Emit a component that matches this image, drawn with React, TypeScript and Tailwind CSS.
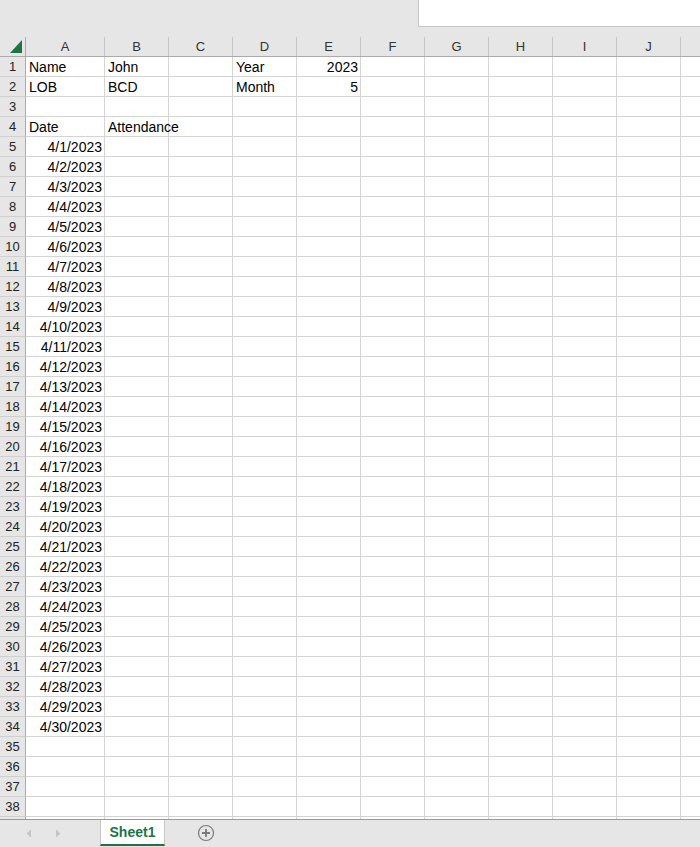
import React from 'react'

const cols = ['A', 'B', 'C', 'D', 'E', 'F', 'G', 'H', 'I', 'J', 'K']
const colWidths: Record<string, string> = {
    A: 'w-[79px]',
}

type Cell = { text: string; right?: boolean }

const cells: Record<string, Cell> = {
    A1: { text: 'Name' },
    B1: { text: 'John' },
    D1: { text: 'Year' },
    E1: { text: '2023', right: true },
    A2: { text: 'LOB' },
    B2: { text: 'BCD' },
    D2: { text: 'Month' },
    E2: { text: '5', right: true },
    A4: { text: 'Date' },
    B4: { text: 'Attendance' },
}

for (let d = 1; d <= 30; d++) {
    cells[`A${d + 4}`] = { text: `4/${d}/2023`, right: true }
}

// row 39 only peeks in by 2px, so it gets no label
const rows = Array.from({ length: 39 }, (_, i) => i + 1)

export default function App() {
    return (
        <div
            className="w-[700px] h-[847px] bg-[#e6e6e6] flex flex-col overflow-hidden text-black"
            style={{ fontFamily: '"Liberation Sans", Arial, sans-serif' }}
        >
            {/* Top strip */}
            <div className="h-[37px] flex shrink-0">
                <div className="ml-auto w-[282px] h-[27px] bg-white border-l border-b border-[#c8c8c8]" />
            </div>

            {/* Grid */}
            <div className="h-[782px] overflow-hidden bg-white shrink-0">
                {/* Column header */}
                <div className="flex h-[20px] bg-[#e6e6e6] border-b border-[#ababab]">
                    <div className="w-[26px] shrink-0 border-r border-[#ababab] relative">
                        <div
                            className="absolute left-[10px] top-[3px] w-[12px] h-[13px] bg-[#217346]"
                            style={{ clipPath: 'polygon(100% 0, 100% 100%, 0 100%)' }}
                        />
                    </div>
                    {cols.map((c) => (
                        <div
                            key={c}
                            className={`${colWidths[c] ?? 'w-[64px]'} shrink-0 border-r border-[#c6c6c6] flex items-center justify-center pt-px text-[13px] text-[#333]`}
                        >
                            {c === 'K' ? '' : c}
                        </div>
                    ))}
                </div>

                {rows.map((r) => (
                    <div key={r} className="flex h-[20px]">
                        <div className="w-[26px] shrink-0 bg-[#e6e6e6] border-r border-[#ababab] border-b border-b-[#d0d0d0] flex items-center justify-center pt-px text-[13px] text-[#222]">
                            {r < 39 ? r : ''}
                        </div>
                        {cols.map((c) => {
                            const cell = cells[`${c}${r}`]
                            return (
                                <div
                                    key={c}
                                    className={`${colWidths[c] ?? 'w-[64px]'} shrink-0 border-r border-b border-[#d4d4d4] flex items-center pt-[2px] text-[14px] whitespace-nowrap ${cell?.right ? 'justify-end pr-[2px]' : 'pl-[3px]'}`}
                                >
                                    {cell?.text}
                                </div>
                            )
                        })}
                    </div>
                ))}
            </div>

            {/* Sheet tabs bar */}
            <div className="flex-1 border-t border-[#9a9a9a] flex items-start">
                <div className="w-[100px] h-[26px] flex items-center gap-[23px] pl-[26px]">
                    <svg width="6" height="9" viewBox="0 0 6 9">
                        <path d="M5 0.5L0.5 4.5L5 8.5Z" fill="#c4c4c4" />
                    </svg>
                    <svg width="6" height="9" viewBox="0 0 6 9">
                        <path d="M1 0.5L5.5 4.5L1 8.5Z" fill="#c4c4c4" />
                    </svg>
                </div>
                <div className="w-[65px] h-[26px] bg-white border-x border-[#c6c6c6] border-b-2 border-b-[#217346] flex items-center justify-center text-[14px] font-bold text-[#217346]">
                    Sheet1
                </div>
                <div className="h-[26px] flex items-center pl-[32px]">
                    <svg width="18" height="18" viewBox="0 0 18 18">
                        <circle cx="9" cy="9" r="7.5" fill="none" stroke="#7a7a7a" strokeWidth="1.2" />
                        <path d="M9 5v8M5 9h8" stroke="#7a7a7a" strokeWidth="1.8" />
                    </svg>
                </div>
            </div>
        </div>
    )
}
